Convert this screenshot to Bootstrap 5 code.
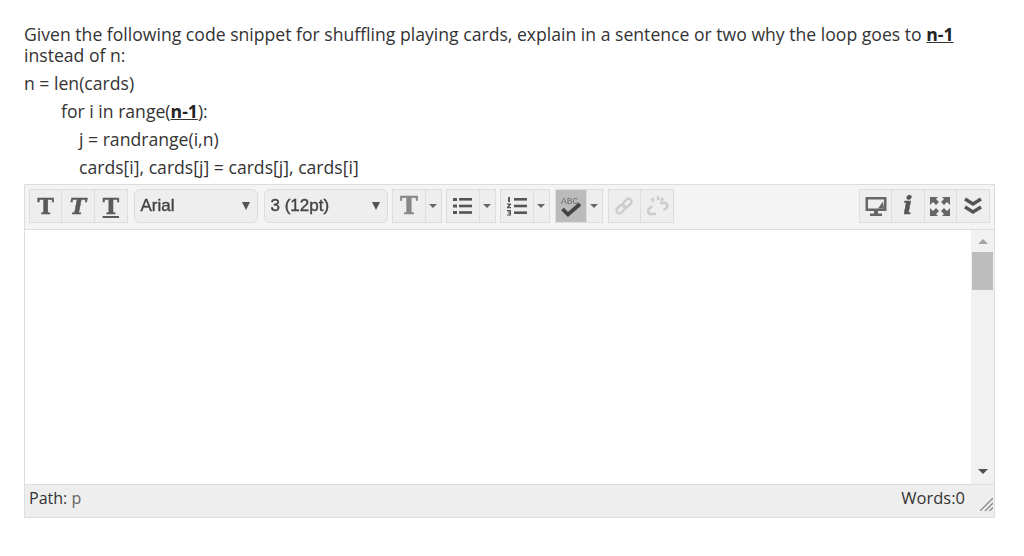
<!DOCTYPE html>
<html lang="en">
<head>
<meta charset="utf-8">
<title>Question</title>
<link href="https://cdn.jsdelivr.net/npm/bootstrap@5.3.0/dist/css/bootstrap.min.css" rel="stylesheet">
<style>
html,body{background:#fff;margin:0;}
body{font-family:"Open Sans",sans-serif;font-size:17.62px;color:#333;padding:24px 29px 0 24px;overflow:hidden;height:556px;}
.qtext{line-height:21px;width:971px;}
.qline{height:28px;line-height:28px;}
.qfirst{margin-top:3px;}
.ind1{padding-left:37px;}
.ind2{padding-left:55px;}
.qtext u b,.qline u b{font-weight:700;color:#222;}
.editor{width:971px;height:334px;border:1px solid #ddd;margin-top:3px;}
.tbar{height:45px;background:#f4f4f4;border-bottom:1px solid #ddd;padding:4px 4px 0 4px;}
.tgroup{height:34px;display:flex;border:1px solid #ddd;background:#eee;}
.tgap{margin-left:4px;}
.tgap5{margin-left:5px;}
.tgap6{margin-left:6px;}
.tbtn{width:32.33px;height:32px;border-right:1px solid #ddd;display:flex;align-items:center;justify-content:center;color:#666;}
.tbtn:last-child{border-right:0;}
.tbtn.narrow{width:15px;}
.tbtn.wsplit{width:33px;}
.tbtn.wspell{width:31px;}
.tbtn.wlink{width:32px;}
.tbtn.wright{width:32.25px;}
.tbtn svg,.glyph,.tsel span{filter:blur(.35px);}
.tbtn svg{display:block;}
.glyph{font-family:"DejaVu Serif",serif;font-weight:700;font-size:22px;line-height:1;color:#5a5a5a;-webkit-text-stroke:.5px #5a5a5a;}
.glyph.it{font-style:italic;}
.glyph.ul{text-decoration:underline;text-underline-offset:2px;text-decoration-thickness:2px;}
.glyph.lt{color:#888;-webkit-text-stroke:.5px #888;font-size:24px;}
.glyph.inf{font-size:24px;color:#555;}
.caret-d{width:0;height:0;border-left:4px solid transparent;border-right:4px solid transparent;border-top:4px solid #666;}
.tsel{width:124px;height:34px;background:#eee;border:1px solid #ddd;border-radius:6px;font-family:"Liberation Sans",sans-serif;font-weight:400;font-size:17px;color:#444;-webkit-text-stroke:.4px #444;padding:0 7px 0 5.5px;}
.sel-arrow{width:0;height:0;border-left:4.5px solid transparent;border-right:4.5px solid transparent;border-top:8px solid #555;}
.pressed{background:#bbb;}
.tsp{margin-left:auto;}
.earea{height:254px;background:#fff;}
.sbar{width:23px;background:#f1f1f1;}
.sarrow{height:22px;}
.sthumb{height:38px;background:#bdbdbd;margin:0 1px;}
.sup{width:0;height:0;border-left:5px solid transparent;border-right:5px solid transparent;border-bottom:5px solid #a3a3a3;}
.sdn{width:0;height:0;border-left:5px solid transparent;border-right:5px solid transparent;border-top:5px solid #505050;}
.sbar-end{height:25px;}
.sflex{flex:1;}
.status{height:33px;background:#eee;border-top:1px solid #ddd;padding:0 1px 0 4px;font-size:16.5px;line-height:26px;color:#333;}
.pathp{color:#666;}
.pathlbl{font-size:16px;}
.grip{margin-left:15px;margin-top:13px;}
</style>
</head>
<body>
<div class="qtext">Given the following code snippet for shuffling playing cards, explain in a sentence or two why the loop goes to <u><b>n-1</b></u> instead of n:</div>
<div class="qline qfirst">n = len(cards)</div>
<div class="qline ind1">for i in range(<u><b>n-1</b></u>):</div>
<div class="qline ind2">j = randrange(i,n)</div>
<div class="qline ind2">cards[i], cards[j] = cards[j], cards[i]</div>
<div class="editor d-flex flex-column">
  <div class="tbar d-flex align-items-start">
    <div class="tgroup">
      <div class="tbtn"><span class="glyph">T</span></div>
      <div class="tbtn"><span class="glyph it">T</span></div>
      <div class="tbtn"><span class="glyph ul">T</span></div>
    </div>
    <div class="tsel tgap6 d-flex align-items-center justify-content-between"><span>Arial</span><i class="sel-arrow"></i></div>
    <div class="tsel tgap6 d-flex align-items-center justify-content-between"><span>3 (12pt)</span><i class="sel-arrow"></i></div>
    <div class="tgroup tgap">
      <div class="tbtn wsplit"><span class="glyph lt">T</span></div>
      <div class="tbtn narrow"><span class="caret-d"></span></div>
    </div>
    <div class="tgroup tgap">
      <div class="tbtn wsplit"><svg width="20" height="18" viewBox="0 0 20 18" fill="#555"><rect x="0" y="1" width="4" height="3"/><rect x="0" y="7.500" width="4" height="3"/><rect x="0" y="14" width="4" height="3"/><rect x="6" y="1" width="13" height="2.600"/><rect x="6" y="7.700" width="13" height="2.600"/><rect x="6" y="14.200" width="13" height="2.600"/></svg></div>
      <div class="tbtn narrow"><span class="caret-d"></span></div>
    </div>
    <div class="tgroup tgap">
      <div class="tbtn wsplit"><svg width="22" height="20" viewBox="0 0 22 20" fill="#555"><path d="M2 1.500 4 .5V6H2zM1 7.500h4v1.300L3 11h2v1.200H1v-1.200l2-2.200H1zM1 14h4v5.500H1v-1h2.700v-1H2v-1h1.700v-1H1z"/><rect x="8" y="2" width="13" height="2.600"/><rect x="8" y="8.700" width="13" height="2.600"/><rect x="8" y="15.400" width="13" height="2.600"/></svg></div>
      <div class="tbtn narrow"><span class="caret-d"></span></div>
    </div>
    <div class="tgroup tgap5">
      <div class="tbtn pressed wspell"><svg width="26" height="26" viewBox="0 0 26 26"><text x="3" y="10.500" font-family="Liberation Mono" font-size="9.500" fill="#6e6e6e">ABC</text><path d="M4.500 16 10 21.500 22 11" fill="none" stroke="#444" stroke-width="3.800"/></svg></div>
      <div class="tbtn narrow"><span class="caret-d"></span></div>
    </div>
    <div class="tgroup tgap5">
      <div class="tbtn wlink"><svg width="18" height="18" viewBox="0 0 20 20" fill="none" stroke="#ccc" stroke-width="2.600"><rect x="8" y="3.500" width="11" height="6.500" rx="3.200" transform="rotate(-45 13.500 6.750)"/><rect x="1" y="10" width="11" height="6.500" rx="3.200" transform="rotate(-45 6.500 13.250)"/></svg></div>
      <div class="tbtn wlink"><svg width="24" height="20" viewBox="0 0 24 20" fill="none" stroke="#ccc" stroke-width="2.600"><path d="M15 7h4.500a3 3 0 0 1 1.500 5.500L18.500 14M11 18H6a3 3 0 0 1-1.500-5.500L7 10M7 2l1.500 3.500M13 0v4M18 2l-2 3"/></svg></div>
    </div>
    <div class="tgroup tsp">
      <div class="tbtn wright"><svg width="22" height="19" viewBox="0 0 22 19"><rect x="0.500" y="0" width="21" height="14" fill="#666"/><rect x="3" y="2.500" width="16" height="9" fill="#eee"/><path d="M13 11.500 18 4.500l1 7z" fill="#666"/><rect x="9" y="14" width="4" height="3" fill="#666"/><rect x="5" y="16.500" width="12" height="2.500" fill="#666"/></svg></div>
      <div class="tbtn wright"><span class="glyph it inf">i</span></div>
      <div class="tbtn wright"><svg width="20" height="19" viewBox="0 0 20 19" fill="#666"><path d="M0 0h8L6 2l3 3-3 3-3-3-3 3zM20 0v8l-3-3-3 3-3-3 3-3-2-2zM0 19v-8l3 3 3-3 3 3-3 3 2 2zM20 19h-8l2-2-3-3 3-3 3 3 3-3z"/></svg></div>
      <div class="tbtn wright"><svg width="18" height="18" viewBox="0 0 18 18" fill="none" stroke="#555" stroke-width="3.400"><path d="M1 2l8 5 8-5M1 10l8 5 8-5"/></svg></div>
    </div>
  </div>
  <div class="d-flex">
    <div class="earea flex-grow-1"></div>
    <div class="sbar d-flex flex-column">
      <div class="sarrow d-flex align-items-center justify-content-center"><span class="sup"></span></div>
      <div class="sthumb"></div>
      <div class="sflex"></div>
      <div class="sbar-end d-flex align-items-center justify-content-center"><span class="sdn"></span></div>
    </div>
  </div>
  <div class="status d-flex">
    <div class="pathlbl">Path: <span class="pathp">p</span></div>
    <div class="ms-auto d-flex"><span>Words:0</span><svg class="grip" width="13" height="13" viewBox="0 0 13 13" stroke="#888" stroke-width="1.300"><path d="M0 13 13 0M5 13l8-8M9.500 13l3.500-3.500"/></svg></div>
  </div>
</div>
<script src="https://cdn.jsdelivr.net/npm/bootstrap@5.3.0/dist/js/bootstrap.bundle.min.js"></script>
</body>
</html>
